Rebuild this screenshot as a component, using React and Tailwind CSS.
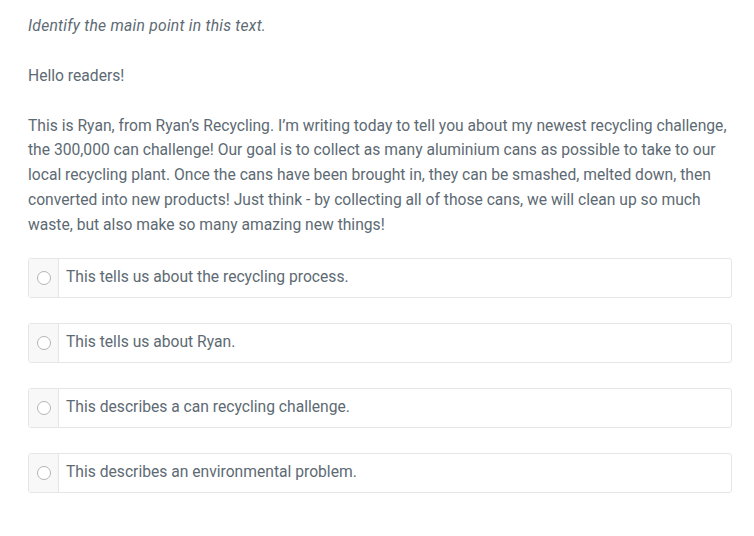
const options = [
  "This tells us about the recycling process.",
  "This tells us about Ryan.",
  "This describes a can recycling challenge.",
  "This describes an environmental problem.",
];

const lines = [
  "This is Ryan, from Ryan’s Recycling. I’m writing today to tell you about my newest recycling challenge,",
  "the 300,000 can challenge! Our goal is to collect as many aluminium cans as possible to take to our",
  "local recycling plant. Once the cans have been brought in, they can be smashed, melted down, then",
  "converted into new products! Just think - by collecting all of those cans, we will clean up so much",
  "waste, but also make so many amazing new things!",
];

export default function App() {
  return (
    <div className="min-h-screen bg-white pl-[28px] pr-[22px] pt-[14px] font-['Roboto',sans-serif] text-[15.65px] leading-[24.75px] text-[#5d6a73]">
      <p className="italic tracking-[0.25px] mb-[25px]">Identify the main point in this text.</p>
      <p className="mb-[25px]">Hello readers!</p>
      <p className="mb-[20.6px]">
        {lines.map((l, i) => (
          <span key={i} className="block whitespace-nowrap">
            {l}
          </span>
        ))}
      </p>
      <div className="flex flex-col gap-[25px]">
        {options.map((o) => (
          <label
            key={o}
            className="flex h-[40px] cursor-pointer overflow-hidden rounded-[3px] border border-[#e6e6e6]"
          >
            <span className="flex w-[30px] shrink-0 items-center justify-center border-r border-[#e6e6e6] bg-[#f8f8f8]">
              <span className="block h-[14px] w-[14px] rounded-full border border-[#b5b5b5] bg-white" />
            </span>
            <span className="flex items-center pl-[7px]">{o}</span>
          </label>
        ))}
      </div>
    </div>
  );
}
